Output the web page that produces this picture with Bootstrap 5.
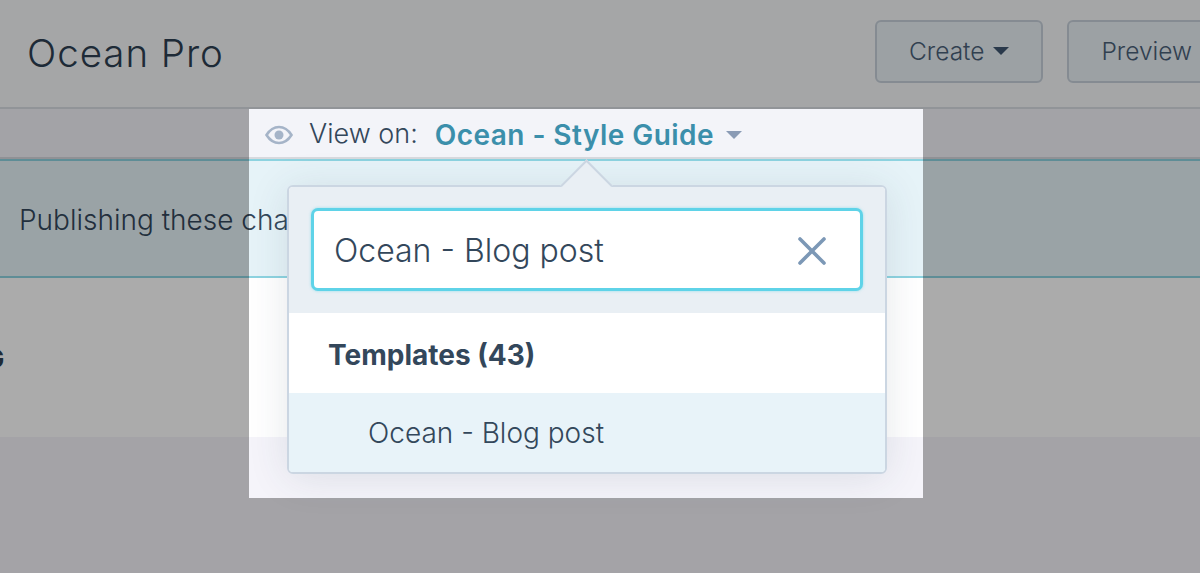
<!DOCTYPE html>
<html lang="en">
<head>
<meta charset="utf-8">
<title>Ocean Pro</title>
<link href="https://cdn.jsdelivr.net/npm/bootstrap@5.3.0/dist/css/bootstrap.min.css" rel="stylesheet">
<style>
html,body{height:100%;overflow:hidden}
body{background:#f5f4fa;color:#33475b;font-family:"Inter","Noto Sans",sans-serif;font-weight:350;position:relative}
.top-head{height:109px;background:#f7f8f9;border-bottom:2px solid #d8dde3;padding:0 0 5px 27px}
.top-title{font-size:38.500px;font-weight:350;color:#2e3f52;margin:0;letter-spacing:.95px;padding-top:5px}
.head-btns{margin-right:-26px;gap:24px}
.head-btn{height:63px;border:2px solid #c6d0da;border-radius:6px;background:#e9f0f5;color:#4a6078;font-size:24.500px;font-weight:350;padding:0 32px;display:flex;align-items:center;gap:9px}
.head-btn .caret-d{border-top-color:#3f5670}
.caret-d{width:0;height:0;border-left:8px solid transparent;border-right:8px solid transparent;border-top:8px solid #8a9bb5;display:inline-block}
.view-strip{height:50px;background:#f3f4f9;border-bottom:2px solid #d7d9de;padding:3px 0 0 265px;font-size:27px;white-space:nowrap}
.view-strip svg{margin-right:16px}
.view-link{font-weight:600;color:#3b8fab;margin-left:17px;margin-right:12px;font-size:28px;letter-spacing:.45px}
.notice-band{height:119px;background:#e6f3f8;border-top:2px solid #8dd3e0;border-bottom:2px solid #8dd3e0;padding:2px 0 0 19px;font-size:28px;white-space:nowrap}
.notice-text{width:268px;overflow:hidden}
.content-area{height:159px;background:#fff;white-space:nowrap;font-weight:600;font-size:26px;padding-top:2px}
.clip-word{margin-left:-15px;color:#2e3f52}
.spot-window{position:absolute;left:249px;top:109px;width:674px;height:389px;box-shadow:0 0 0 3000px rgba(0,0,0,.33);pointer-events:none}
.pop-panel{position:absolute;left:287px;top:185px;width:600px;height:289px;background:#fff;border:2px solid #cbd6e2;border-radius:6px;box-shadow:0 4px 40px rgba(45,62,80,.12)}
.pop-tip{position:absolute;left:279px;top:-20px;width:37px;height:37px;transform:rotate(45deg);background:#e9eff4;border-left:2px solid #cbd6e2;border-top:2px solid #cbd6e2}
.pop-search{position:relative;height:126px;background:#e9eff4;padding:21px 22px 22px;border-radius:4px 4px 0 0}
.pop-input{height:83px;background:#fff;border:3px solid #5fd3e8;border-radius:7px;box-shadow:0 0 3px rgba(95,211,232,.6);padding:2px 33px 0 20px;font-size:32px;color:#33475b}
.pop-head{height:80px;font-weight:700;font-size:28px;padding:3px 0 0 39px;color:#33475b}
.pop-item{height:79px;background:#e8f3f9;font-size:28px;padding-left:79px;color:#33475b;border-radius:0 0 4px 4px}
</style>
</head>
<body>
<header class="top-head d-flex align-items-center justify-content-between">
  <h1 class="top-title">Ocean Pro</h1>
  <div class="head-btns d-flex flex-shrink-0">
    <div class="head-btn">Create <span class="caret-d"></span></div>
    <div class="head-btn">Preview</div>
  </div>
</header>
<div class="view-strip d-flex align-items-center">
  <svg width="28" height="20" viewBox="0 0 28 20" aria-hidden="true"><path d="M1.500 10C5 4.500 9 2 14 2s9 2.500 12.500 8C23 15.500 19 18 14 18S5 15.500 1.500 10Z" fill="none" stroke="#a5b4c8" stroke-width="2.600"/><circle cx="14" cy="10" r="4.500" fill="#a5b4c8"/></svg>
  <span>View on:</span>
  <span class="view-link">Ocean - Style Guide</span>
  <span class="caret-d"></span>
</div>
<div class="notice-band d-flex align-items-center"><div class="notice-text">Publishing these changes</div></div>
<div class="content-area d-flex align-items-center"><span class="clip-word">G</span></div>
<div class="spot-window"></div>
<div class="pop-panel">
  <div class="pop-tip"></div>
  <div class="pop-search">
    <div class="pop-input d-flex align-items-center justify-content-between">
      <span>Ocean - Blog post</span>
      <svg width="30" height="30" viewBox="0 0 30 30" aria-hidden="true"><path d="M3 3 27 27M27 3 3 27" stroke="#7c98b6" stroke-width="3.600" stroke-linecap="round"/></svg>
    </div>
  </div>
  <div class="pop-head d-flex align-items-center">Templates (43)</div>
  <div class="pop-item d-flex align-items-center">Ocean - Blog post</div>
</div>
<script src="https://cdn.jsdelivr.net/npm/bootstrap@5.3.0/dist/js/bootstrap.bundle.min.js"></script>
</body>
</html>
